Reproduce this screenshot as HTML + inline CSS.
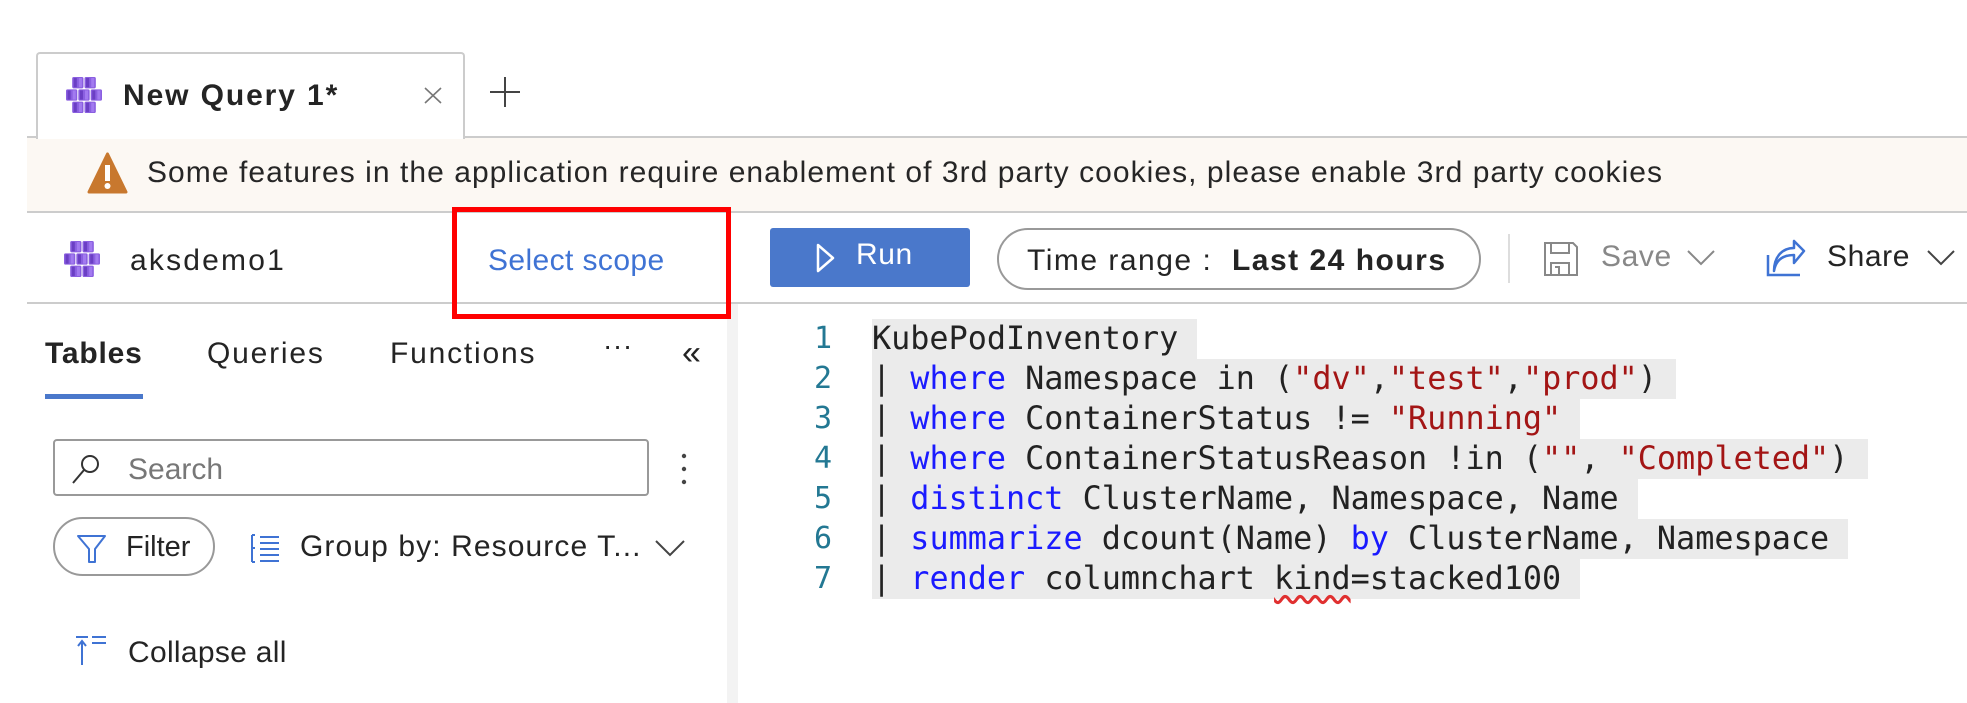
<!DOCTYPE html>
<html><head><meta charset="utf-8"><style>
*{margin:0;padding:0;box-sizing:border-box}
body{width:1967px;height:703px;position:relative;background:#fff;font-family:"Liberation Sans",sans-serif;color:#242424;overflow:hidden}
.a{position:absolute;white-space:nowrap;letter-spacing:0.6px}
.code{font-family:"DejaVu Sans Mono","Liberation Mono",monospace;font-size:31.8px;line-height:40px;letter-spacing:0}
.ln{position:absolute;left:780px;width:52px;text-align:right;color:#237893;font-family:"DejaVu Sans Mono",monospace;font-size:30px;line-height:40px}
.cl{position:absolute;left:872px;height:40px;background:#ebebeb;color:#222;white-space:pre}
.k{color:#1a1aff}.s{color:#a31515}
</style></head><body>
<svg width="0" height="0" style="position:absolute"><defs>
<g id="cube"><rect x="0" y="0" width="11" height="11" rx="1.5" fill="#8a5fe0"/><rect x="1.5" y="1" width="3" height="9" fill="#6b3fc4"/><rect x="6.5" y="1" width="3" height="9" fill="#a27af0"/></g>
<g id="k8"><use href="#cube" x="7" y="0"/><use href="#cube" x="19" y="0"/><use href="#cube" x="1" y="12"/><use href="#cube" x="13" y="12"/><use href="#cube" x="25" y="12"/><use href="#cube" x="7" y="24"/><use href="#cube" x="19" y="24"/></g>
</defs></svg>

<div class="a" style="left:36px;top:52px;width:429px;height:87px;border:2px solid #ccc;border-bottom:none;border-radius:4px 4px 0 0;background:#fff;z-index:2"></div>
<div class="a" style="left:27px;top:136px;width:1940px;height:2px;background:#ccc"></div>
<div class="a" style="left:38px;top:136px;width:425px;height:3px;background:#fff;z-index:3"></div>
<svg class="a" style="left:64px;top:77px;z-index:4" width="40" height="36" viewBox="0 0 37 35"><use href="#k8"/></svg>
<div class="a" style="left:123px;top:79px;font-size:30px;font-weight:bold;z-index:4;letter-spacing:1.9px">New Query 1*</div>
<svg class="a" style="left:424px;top:87px;z-index:4" width="18" height="17"><path d="M1 1L17 16M17 1L1 16" stroke="#777" stroke-width="1.6"/></svg>
<svg class="a" style="left:490px;top:77px" width="30" height="30"><path d="M15 0V30M0 15H30" stroke="#444" stroke-width="2"/></svg>

<div class="a" style="left:27px;top:138px;width:1940px;height:74px;background:#fcf8f3"></div>
<div class="a" style="left:27px;top:211px;width:1940px;height:2px;background:#ccc"></div>
<svg class="a" style="left:87px;top:152px" width="41" height="42" viewBox="0 0 41 42"><path d="M20.5 2L39 40H2Z" fill="#c8782e" stroke="#c8782e" stroke-width="3" stroke-linejoin="round"/><rect x="18" y="13" width="5" height="16" fill="#fff"/><circle cx="20.5" cy="34" r="3" fill="#fff"/></svg>
<div class="a" style="left:147px;top:156px;font-size:30px;color:#262626;letter-spacing:1.05px">Some features in the application require enablement of 3rd party cookies, please enable 3rd party cookies</div>

<svg class="a" style="left:62px;top:241px" width="40" height="36" viewBox="0 0 37 35"><use href="#k8"/></svg>
<div class="a" style="left:130px;top:244px;font-size:30px;letter-spacing:2.2px">aksdemo1</div>
<div class="a" style="left:488px;top:244px;font-size:30px;color:#3f73d4;letter-spacing:0.4px">Select scope</div>
<div class="a" style="left:452px;top:207px;width:279px;height:112px;border:5px solid #f00;z-index:5"></div>
<div class="a" style="left:770px;top:228px;width:200px;height:59px;background:#4a78cb;border-radius:3px"></div>
<svg class="a" style="left:815px;top:243px" width="20" height="30"><path d="M3 2L18 15L3 28Z" fill="none" stroke="#fff" stroke-width="2.5" stroke-linejoin="round"/></svg>
<div class="a" style="left:856px;top:238px;font-size:30px;color:#fff">Run</div>
<div class="a" style="left:997px;top:228px;width:484px;height:62px;border:2px solid #999;border-radius:31px"></div>
<div class="a" style="left:1027px;top:244px;font-size:30px;letter-spacing:1.5px">Time range :&nbsp; <b>Last 24 hours</b></div>
<div class="a" style="left:1508px;top:234px;width:2px;height:49px;background:#ddd"></div>
<svg class="a" style="left:1543px;top:241px" width="36" height="36"><path d="M2 2H30L34 6V34H2Z M8 2V12H26V2 M8 34V22H26V34 M12 26H16V34" fill="none" stroke="#888" stroke-width="2"/></svg>
<div class="a" style="left:1601px;top:240px;font-size:30px;color:#888">Save</div>
<svg class="a" style="left:1687px;top:250px" width="28" height="16"><path d="M1 1L14 14L27 1" fill="none" stroke="#888" stroke-width="2"/></svg>
<svg class="a" style="left:1766px;top:239px" width="40" height="38"><path d="M2 16V36H34" fill="none" stroke="#3f73d4" stroke-width="2.5"/><path d="M8 32C10 20 18 16 28 16V24L38 12L28 2V9C16 9 8 18 8 32Z" fill="none" stroke="#3f73d4" stroke-width="2.5" stroke-linejoin="round"/></svg>
<div class="a" style="left:1827px;top:240px;font-size:30px">Share</div>
<svg class="a" style="left:1927px;top:250px" width="28" height="16"><path d="M1 1L14 14L27 1" fill="none" stroke="#444" stroke-width="2"/></svg>
<div class="a" style="left:27px;top:302px;width:1940px;height:2px;background:#ccc"></div>

<div class="a" style="left:727px;top:304px;width:11px;height:399px;background:#f3f3f3"></div>
<div class="a" style="left:45px;top:337px;font-size:30px;font-weight:bold;letter-spacing:0.8px">Tables</div>
<div class="a" style="left:45px;top:394px;width:98px;height:5px;background:#4a78cb"></div>
<div class="a" style="left:207px;top:337px;font-size:30px;letter-spacing:1.8px">Queries</div>
<div class="a" style="left:390px;top:337px;font-size:30px;letter-spacing:1.8px">Functions</div>
<div class="a" style="left:603px;top:330px;font-size:28px">···</div>
<div class="a" style="left:682px;top:334px;font-size:34px">«</div>
<div class="a" style="left:53px;top:439px;width:596px;height:57px;border:2px solid #999;border-radius:4px"></div>
<svg class="a" style="left:70px;top:453px" width="32" height="32"><circle cx="20" cy="11" r="8" fill="none" stroke="#333" stroke-width="2"/><path d="M14 17L3 30" stroke="#333" stroke-width="2"/></svg>
<div class="a" style="left:128px;top:453px;font-size:30px;color:#777;letter-spacing:0">Search</div>
<svg class="a" style="left:679px;top:452px" width="10" height="34"><circle cx="5" cy="4" r="2.2" fill="#444"/><circle cx="5" cy="17" r="2.2" fill="#444"/><circle cx="5" cy="30" r="2.2" fill="#444"/></svg>
<div class="a" style="left:53px;top:517px;width:162px;height:59px;border:2px solid #999;border-radius:30px"></div>
<svg class="a" style="left:76px;top:534px" width="31" height="30"><path d="M2 2H29L19 15V28H13V15Z" fill="none" stroke="#3f73d4" stroke-width="2" stroke-linejoin="round"/></svg>
<div class="a" style="left:126px;top:531px;font-size:29px;letter-spacing:0">Filter</div>
<svg class="a" style="left:249px;top:532px" width="32" height="32"><path d="M3 3V30M3 3H6M3 16H6M3 30H6M11 5H30M11 11H30M11 17H30M11 23H30M11 29H30" stroke="#3f73d4" stroke-width="2"/></svg>
<div class="a" style="left:300px;top:530px;font-size:30px;letter-spacing:1.1px">Group by: Resource T...</div>
<svg class="a" style="left:655px;top:540px" width="30" height="17"><path d="M1 1L15 15L29 1" fill="none" stroke="#444" stroke-width="2"/></svg>
<svg class="a" style="left:74px;top:635px" width="34" height="32"><path d="M2 2H14M18 2H32M18 8H32M8 30V7M4 11L8 6L12 11" fill="none" stroke="#3f73d4" stroke-width="2"/></svg>
<div class="a" style="left:128px;top:636px;font-size:30px;letter-spacing:0.3px">Collapse all</div>

<div class="ln" style="top:319px">1</div><div class="ln" style="top:359px">2</div><div class="ln" style="top:399px">3</div><div class="ln" style="top:439px">4</div><div class="ln" style="top:479px">5</div><div class="ln" style="top:519px">6</div><div class="ln" style="top:559px">7</div>
<div class="cl code" style="top:319px">KubePodInventory </div>
<div class="cl code" style="top:359px">| <span class="k">where</span> Namespace in (<span class="s">"dv"</span>,<span class="s">"test"</span>,<span class="s">"prod"</span>) </div>
<div class="cl code" style="top:399px">| <span class="k">where</span> ContainerStatus != <span class="s">"Running"</span> </div>
<div class="cl code" style="top:439px">| <span class="k">where</span> ContainerStatusReason !in (<span class="s">""</span>, <span class="s">"Completed"</span>) </div>
<div class="cl code" style="top:479px">| <span class="k">distinct</span> ClusterName, Namespace, Name </div>
<div class="cl code" style="top:519px">| <span class="k">summarize</span> dcount(Name) <span class="k">by</span> ClusterName, Namespace </div>
<div class="cl code" style="top:559px">| <span class="k">render</span> columnchart <span style="text-decoration:underline wavy #e03030;text-underline-offset:6px">kind</span>=stacked100 </div>
</body></html>
